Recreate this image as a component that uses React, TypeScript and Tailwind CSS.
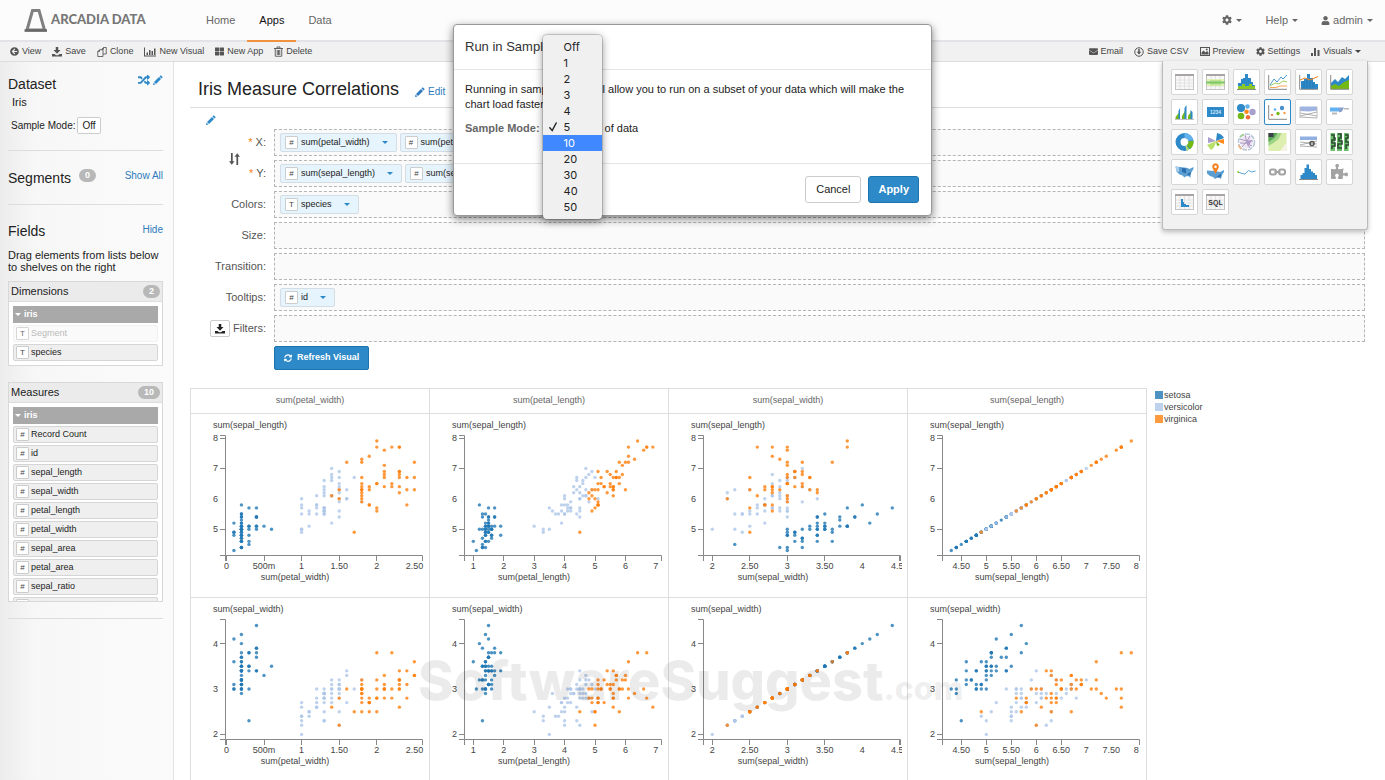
import { Fragment, useState, type ReactNode } from "react";
import {
  FaArrowCircleLeft,
  FaCog,
  FaEnvelope,
  FaPuzzlePiece,
  FaRandom,
  FaSyncAlt,
  FaThLarge,
  FaUser,
} from "react-icons/fa";

/* ---------- data: sepal length, sepal width, petal length, petal width (x10) ---------- */

const SETOSA =
  "51 35 14 2,49 30 14 2,47 32 13 2,46 31 15 2,50 36 14 2,54 39 17 4,46 34 14 3,50 34 15 2,44 29 14 2,49 31 15 1,54 37 15 2,48 34 16 2,48 30 14 1,43 30 11 1,58 40 12 2,57 44 15 4,54 39 13 4,51 35 14 3,57 38 17 3,51 38 15 3,54 34 17 2,51 37 15 4,46 36 10 2,51 33 17 5,48 34 19 2,50 30 16 2,50 34 16 4,52 35 15 2,52 34 14 2,47 32 16 2,48 31 16 2,54 34 15 4,52 41 15 1,55 42 14 2,49 31 15 2,50 32 12 2,55 35 13 2,49 36 14 1,44 30 13 2,51 34 15 2,50 35 13 3,45 23 13 3,44 32 13 2,50 35 16 6,51 38 19 4,48 30 14 3,51 38 16 2,46 32 14 2,53 37 15 2,50 33 14 2";
const VERSICOLOR =
  "70 32 47 14,64 32 45 15,69 31 49 15,55 23 40 13,65 28 46 15,57 28 45 13,63 33 47 16,49 24 33 10,66 29 46 13,52 27 39 14,50 20 35 10,59 30 42 15,60 22 40 10,61 29 47 14,56 29 36 13,67 31 44 14,56 30 45 15,58 27 41 10,62 22 45 15,56 25 39 11,59 32 48 18,61 28 40 13,63 25 49 15,61 28 47 12,64 29 43 13,66 30 44 14,68 28 48 14,67 30 50 17,60 29 45 15,57 26 35 10,55 24 38 11,55 24 37 10,58 27 39 12,60 27 51 16,54 30 45 15,60 34 45 16,67 31 47 15,63 23 44 13,56 30 41 13,55 25 40 13,55 26 44 12,61 30 46 14,58 26 40 12,50 23 33 10,56 27 42 13,57 30 42 12,57 29 42 13,62 29 43 13,51 25 30 11,57 28 41 13";
const VIRGINICA =
  "63 33 60 25,58 27 51 19,71 30 59 21,63 29 56 18,65 30 58 22,76 30 66 21,49 25 45 17,73 29 63 18,67 25 58 18,72 36 61 25,65 32 51 20,64 27 53 19,68 30 55 21,57 25 50 20,58 28 51 24,64 32 53 23,65 30 55 18,77 38 67 22,77 26 69 23,60 22 50 15,69 32 57 23,56 28 49 20,77 28 67 20,63 27 49 18,67 33 57 21,72 32 60 18,62 28 48 18,61 30 49 18,64 28 56 21,72 30 58 16,74 28 61 19,79 38 64 20,64 28 56 22,63 28 51 15,61 26 56 14,77 30 61 23,63 34 56 24,64 31 55 18,60 30 48 18,69 31 54 21,67 31 56 24,69 31 51 23,58 27 51 19,68 32 59 23,67 33 57 25,67 30 52 23,63 25 50 19,65 30 52 20,62 34 54 23,59 30 51 18";

const parse = (s: string) => s.split(",").map((r) => r.split(" ").map((n) => Number(n) / 10));

const SPECIES = [
  { name: "setosa", color: "#1f77b4", rows: parse(SETOSA) },
  { name: "versicolor", color: "#aec7e8", rows: parse(VERSICOLOR) },
  { name: "virginica", color: "#ff7f0e", rows: parse(VIRGINICA) },
];

type Axis = {
  name: string;
  field: number;
  origin: number;
  step: number;
  ticks: [number, string, boolean][];
};

const X_AXES: Axis[] = [
  {
    name: "sum(petal_width)", field: 3, origin: 35.4, step: 75.2,
    ticks: [[0, "0", true], [0.5, "500m", true], [1, "1", true], [1.5, "1.50", true], [2, "2", true], [2.5, "2.50", false]],
  },
  {
    name: "sum(petal_length)", field: 2, origin: 12.9, step: 30.42,
    ticks: [[1, "1", true], [2, "2", true], [3, "3", true], [4, "4", true], [5, "5", true], [6, "6", true], [7, "7", false]],
  },
  {
    name: "sum(sepal_width)", field: 1, origin: -106.7, step: 75,
    ticks: [[2, "2", true], [2.5, "2.50", true], [3, "3", true], [3.5, "3.50", true], [4, "4", false], [4.5, "4.50", true]],
  },
  {
    name: "sum(sepal_length)", field: 0, origin: -171.7, step: 50,
    ticks: [[4.5, "4.50", true], [5, "5", true], [5.5, "5.50", true], [6, "6", true], [6.5, "6.50", true], [7, "7", false], [7.5, "7.50", false], [8, "8", false]],
  },
];

const Y_AXES: Axis[] = [
  {
    name: "sum(sepal_length)", field: 0, origin: 267.2, step: -30.4,
    ticks: [[8, "8", true], [7, "7", true], [6, "6", false], [5, "5", true]],
  },
  {
    name: "sum(sepal_width)", field: 1, origin: 227.2, step: -45.4,
    ticks: [[4, "4", true], [3, "3", false], [2, "2", true]],
  },
];

const snap = (n: number) => Math.floor(n) + 0.5;

function Scatter({ x, y }: { x: Axis; y: Axis }) {
  const px = (v: number) => x.origin + x.step * v;
  const py = (v: number) => y.origin + y.step * v;
  return (
    <svg viewBox="0 0 238 183" className="block h-auto w-full" role="img" aria-label={`${y.name} by ${x.name}`}>
      <svg width="233" height="183" fontSize="9" fill="#444">
        <text x="22" y="14">{y.name}</text>
        <g fill="none" stroke="#888">
          <path d="M29 21.5H34.5V141.5H29" />
          <path d="M34.5 147V141.5H231.5V147" />
          {x.ticks.filter((t) => t[2]).map(([v]) => (
            <path key={v} d={`M${snap(px(v))} 141.5V147`} />
          ))}
          {y.ticks.filter((t) => t[2]).map(([v]) => (
            <path key={v} d={`M34.5 ${snap(py(v))}H29`} />
          ))}
        </g>
        {x.ticks.map(([v, label]) => (
          <text key={v} x={px(v)} y="155" textAnchor="middle">{label}</text>
        ))}
        {y.ticks.map(([v, label]) => (
          <text key={v} x="27" y={py(v) + 3} textAnchor="end">{label}</text>
        ))}
        <text x="104" y="166" textAnchor="middle">{x.name}</text>
        {SPECIES.map((s) => (
          <g key={s.name} fill={s.color} fillOpacity="0.8">
            {s.rows.map((r, i) => (
              <circle key={i} cx={px(r[x.field])} cy={py(r[y.field])} r="1.7" />
            ))}
          </g>
        ))}
      </svg>
    </svg>
  );
}

/* ---------- small icons ---------- */

function Caret({ className = "" }: { className?: string }) {
  return (
    <svg viewBox="0 0 6 3" className={`h-[3px] w-[6px] shrink-0 ${className}`} fill="currentColor" aria-hidden="true">
      <path d="M0 0h6L3 3z" />
    </svg>
  );
}

const glyph = "h-[10px] w-[10px] shrink-0";

const DownloadGlyph = () => (
  <svg viewBox="0 0 20 20" className={glyph} fill="currentColor" aria-hidden="true">
    <path d="M7.500 0h5v6H17l-7 7.500L3 6h4.500zM0 14h5l3 2.500h4L15 14h5v5H0z" />
  </svg>
);
const CloneGlyph = () => (
  <svg viewBox="0 0 20 20" className={glyph} fill="none" stroke="currentColor" strokeWidth="1.700" aria-hidden="true">
    <path d="M9.500 4.500L13 1h5.500v13H12M13 1v3.500H9.500M1.500 9L5 5.500h7V19H1.500zM5 5.500V9H1.500" />
  </svg>
);
const BarsAxisGlyph = () => (
  <svg viewBox="0 0 24 20" className="h-[10px] w-[12px] shrink-0" fill="currentColor" aria-hidden="true">
    <path d="M0 1h2v16h22v2H0zM5 11h3v5H5zM10 6h3v10h-3zM15 8h3v8h-3zM20 3h3v13h-3z" />
  </svg>
);
const BarsGlyph = () => (
  <svg viewBox="0 0 18 20" className="h-[10px] w-[9px] shrink-0" fill="currentColor" aria-hidden="true">
    <path d="M0 12h4v6H0zM6 2h4v16H6zM13 6h4v12h-4z" />
  </svg>
);
const TrashGlyph = () => (
  <svg viewBox="0 0 18 22" className="h-[11px] w-[9px] shrink-0" fill="none" stroke="currentColor" strokeWidth="1.800" aria-hidden="true">
    <path d="M0 5h18M6 5V2h6v3M2.500 5v15.500h13V5M6.500 8v10M9 8v10M11.500 8v10" />
  </svg>
);
const CircleDownGlyph = () => (
  <svg viewBox="0 0 20 20" className={glyph} fill="none" stroke="currentColor" strokeWidth="2" aria-hidden="true">
    <circle cx="10" cy="10" r="8.500" />
    <path d="M10 4v9" strokeWidth="3" />
    <path d="M5.500 9.500h9L10 15z" fill="currentColor" stroke="none" />
  </svg>
);
const PictureGlyph = () => (
  <svg viewBox="0 0 20 18" className="h-[9px] w-[10px] shrink-0" fill="currentColor" aria-hidden="true">
    <path fillRule="evenodd" d="M0 0h20v18H0zM2 2v14h16V2z" />
    <path d="M3 15v-4l4-4 4 4 3-3 3 3v4z" />
    <circle cx="13.500" cy="5" r="1.800" />
  </svg>
);
const PencilGlyph = () => (
  <svg viewBox="0 0 20 20" className={glyph} fill="currentColor" aria-hidden="true">
    <path d="M15.500 0.500l4 4-2.500 2.500-4-4zM12 4l4 4L6 18 2 14zM1.200 15.200l3.600 3.600L0 20z" />
  </svg>
);
const SwapGlyph = () => (
  <svg viewBox="0 0 20 22" className="h-[12px] w-[11px] shrink-0" fill="currentColor" aria-hidden="true">
    <path d="M3.500 0h3.200v15H10l-5 6.500L0 15h3.500zM13.500 22V7H10l5-6.500L20 7h-3.300v15z" />
  </svg>
);

/* ---------- visual palette drawings, all on a 20x18 board ---------- */

const Grid = ({ children }: { children?: ReactNode }) => (
  <>
    <rect x="0.500" y="1.500" width="18" height="15" fill="#f8f8f8" stroke="#c4c4c4" />
    <path d="M5 3v13M9.500 3v13M14 3v13M1 7h17M1 10h17M1 13h17" stroke="#ddd" strokeWidth="0.800" />
    {children}
    <rect x="0" y="1" width="19" height="2" fill="#a9a5a5" />
  </>
);
const Frame = () => <path d="M0.700 2V16.300H19" fill="none" stroke="#888" />;

const visuals: { name: string; art: ReactNode }[] = [
  { name: "Table", art: <Grid /> },
  {
    name: "Cross tabulation",
    art: (
      <Grid>
        <rect x="1" y="6" width="17" height="7" fill="#e2f1b8" />
        <rect x="4" y="7" width="11" height="5.500" fill="#c0e391" />
        <rect x="0" y="8.500" width="19" height="2" fill="#7cc66c" />
      </Grid>
    ),
  },
  {
    name: "Bars",
    art: (
      <>
        <path d="M1 14V10h3V6h2V5h2V1h3v4h3v4h2v3h2v3z" fill="#2d89c8" />
        <path d="M1 16v-3h4v-2h3v2h4v-2h3v2h3v3z" fill="#8bc926" />
        <path d="M0 16.500h19" stroke="#888" />
      </>
    ),
  },
  {
    name: "Lines",
    art: (
      <g fill="none" strokeWidth="1">
        <Frame />
        <path d="M2 12l4-6 3 3 4-5 2 2 4-4" stroke="#4a9ad4" />
        <path d="M2 13l5-3 4 1 4-3 4 1" stroke="#9bd05a" />
        <path d="M2 14.500h6l4-1.500h7" stroke="#f7a35c" />
      </g>
    ),
  },
  {
    name: "Combo",
    art: (
      <>
        <path d="M2 16V8h3V6h3V1h3v4h3v4h2v2h3v5z" fill="#2d89c8" />
        <path d="M5 8v8M8 6v10M11 6v10M14 9v7" stroke="#1c6ba3" strokeWidth="0.500" />
        <path d="M1 7l5-2 5 2 8-3.500" stroke="#f58220" fill="none" />
        <Frame />
      </>
    ),
  },
  {
    name: "Areas",
    art: (
      <>
        <path d="M1 16v-6l4-4 3 3 4-5 3 2 4-4v13z" fill="#2d89c8" />
        <path d="M1 16v-3l4-2 4 2 5-4 5-2v9z" fill="#74b816" />
        <Frame />
      </>
    ),
  },
  {
    name: "Grouped bars",
    art: (
      <>
        <path d="M0.500 16v-2l4-5v7zM7 16v-3l3.500-6v9zM13 16v-3l3-4v7z" fill="#74b816" />
        <path d="M3.500 16V8l1.500-3v11zM9.500 16V5L11.500 2v14zM15.500 16V7l2 2v7z" fill="#2d89c8" />
        <path d="M0 16.500h19" stroke="#999" strokeWidth="0.600" />
      </>
    ),
  },
  {
    name: "KPI",
    art: (
      <>
        <rect x="1" y="4" width="17" height="10" fill="#2d89c8" />
        <text x="9.500" y="11" fontSize="5" fontWeight="700" fill="#d3e8f6" textAnchor="middle">1234</text>
      </>
    ),
  },
  {
    name: "Bubbles",
    art: (
      <>
        <circle cx="4" cy="5" r="4" fill="#2d89c8" />
        <circle cx="10.500" cy="3.500" r="2.300" fill="#62b0ec" />
        <circle cx="15.500" cy="9" r="3.200" fill="#a99fcb" />
        <circle cx="4" cy="13" r="3.300" fill="#74b816" />
        <circle cx="9.500" cy="8.800" r="2.300" fill="#ff8a1e" />
        <circle cx="11" cy="14.200" r="2.200" fill="#f26b38" />
      </>
    ),
  },
  {
    name: "Scatter",
    art: (
      <>
        <Frame />
        <circle cx="14" cy="5" r="2.200" fill="#4a90cc" />
        <circle cx="7" cy="6.500" r="1.300" fill="#62b0ec" />
        <circle cx="10" cy="10.500" r="1.700" fill="#74b816" />
        <circle cx="4" cy="12" r="1.100" fill="#f26b38" />
        <circle cx="16.500" cy="10" r="1.200" fill="#ff9b3e" />
      </>
    ),
  },
  {
    name: "Parallel coordinates",
    art: (
      <g fill="none">
        <path d="M1 3.500h17v4l-8 1-9-.5z" fill="#9fb4e0" />
        <path d="M1 10l17 3M1 13l17-4M1 14l17 1" stroke="#9a9a9a" strokeWidth="0.800" />
        <path d="M1 4v11M18 4v11" stroke="#bbb" />
      </g>
    ),
  },
  {
    name: "Flow",
    art: (
      <>
        <path d="M0 4.500h9v4H0z" fill="#63b2ef" />
        <path d="M9 4.500h5l-2 4-3 1z" fill="#8a9fd0" />
        <path d="M2 9.500h5v2H2zM14 5h5v1.500h-5z" fill="#b9b9b9" />
      </>
    ),
  },
  {
    name: "Pie",
    art: (
      <g fill="none" strokeWidth="5">
        <circle cx="9.500" cy="9" r="6.500" stroke="#2d89c8" />
        <path d="M9.500 2.500A6.500 6.500 0 0 1 15.800 7.500" stroke="#62b0ec" />
        <path d="M15.900 8A6.500 6.500 0 0 1 13.500 14" stroke="#74b816" />
        <path d="M13 14.500A6.500 6.500 0 0 1 11 15.400" stroke="#b8e06a" />
      </g>
    ),
  },
  {
    name: "Radial",
    art: (
      <>
        <path d="M10 8L11 0q5 1 7 5z" fill="#2d89c8" />
        <path d="M10 8l8-2v5z" fill="#ff8a1e" />
        <path d="M10 8L1 12l4 5q4-2 5-9z" fill="#b8e06a" />
        <path d="M10 8L2 4v6z" fill="#a99fcb" />
        <path d="M10 8l4 4-3 1z" fill="#74b816" />
      </>
    ),
  },
  {
    name: "Chord",
    art: (
      <g fill="none">
        <circle cx="9.500" cy="9" r="8" stroke="#b9c9d8" strokeWidth="1.600" strokeDasharray="5 1" />
        <circle cx="9.500" cy="9" r="6.500" fill="#eee7f3" />
        <path d="M3 6q6 3 13 2M5 14q5-5 8-11M8 2q1 8 5 13M3 10q7-1 12 3" stroke="#a58fb8" strokeWidth="0.900" />
        <path d="M9 8l6-1-4 7z" fill="#b09ccc" />
        <path d="M1.500 12a8 8 0 0 0 3 4" stroke="#f1b27a" strokeWidth="1.600" />
        <path d="M3 4a8 8 0 0 1 4-2.500" stroke="#9dd08c" strokeWidth="1.600" />
      </g>
    ),
  },
  {
    name: "Heat map",
    art: (
      <>
        <rect x="0.500" y="0" width="18" height="18" fill="#dcefae" />
        <path d="M0.500 0h13l-3 6-5 4-5 3z" fill="#9ed486" />
        <path d="M0.500 0h9l-3 5-6 4z" fill="#5aa75a" />
        <path d="M0.500 0h5v4h-5z" fill="#3a3f4a" />
        <path d="M12 18l6.500-9v9z" fill="#f5f3e4" />
      </>
    ),
  },
  {
    name: "Parallel settings",
    art: (
      <g fill="none">
        <path d="M1 3.500h17v3.500H1z" fill="#8fb0e0" />
        <path d="M1 9l17 2M1 12l17-4M1 13l17 1" stroke="#9a9a9a" strokeWidth="0.800" />
        <circle cx="13" cy="10.500" r="2" stroke="#555" strokeWidth="1.600" />
      </g>
    ),
  },
  {
    name: "Dendrogram",
    art: (
      <>
        <path d="M0.500 0H5v18H0.500zM7 0h5v18H7zM14 0h4.500v18H14z" fill="#6abf69" />
        <path d="M1 2h3v3h1v2H2v3h3v3H2v3M8 1h3v4H9v3h3v3H8v4h4M15 2h3v3h-2v4h3v3h-3v4" stroke="#2c4a34" fill="none" strokeWidth="1.600" />
      </>
    ),
  },
  {
    name: "Map",
    art: (
      <>
        <path d="M0.500 3.500l9 1 3 .5 2 1 4-2v2l-2 3-1 3v3l-2-2-3 .5-1 1-2-2-3-1-3-3z" fill="#5b9fd2" />
        <path d="M7 5l4 .5v5L7 9zM12 11l4-2-1 4z" fill="#2d6fae" />
        <path d="M0.500 3.500l3.500.5V9L1.500 8z" fill="#a8cdea" />
      </>
    ),
  },
  {
    name: "Marker map",
    art: (
      <>
        <path d="M1 7.500l8 .5 5 1 4-2v2l-2 3-1 4-3-2-3 2-2-2-3-1-3-2.500z" fill="#5b9fd2" />
        <path d="M10 14.500l5-4v3l-2 1z" fill="#2d6fae" />
        <path d="M9.500 11L6.500 5a3.300 3.300 0 1 1 6 0z" fill="#f58220" />
        <circle cx="9.500" cy="3.700" r="1.300" fill="#fff" />
      </>
    ),
  },
  {
    name: "Spark lines",
    art: (
      <>
        <path d="M1 9l4 1.500 3 .5 3.500-3.500 3 1.500 4-1" stroke="#4a9ad4" fill="none" strokeWidth="0.900" />
        <circle cx="1.200" cy="9" r="0.900" fill="#8bc926" />
      </>
    ),
  },
  {
    name: "Link",
    art: (
      <g fill="none" stroke="#a3a3a3" strokeWidth="2">
        <rect x="2" y="6.500" width="6" height="5" rx="2" />
        <rect x="11" y="6.500" width="6" height="5" rx="2" />
        <path d="M6.500 9h6" />
      </g>
    ),
  },
  {
    name: "Histogram",
    art: (
      <>
        <path d="M1.500 16v-4h2v-2h2V5h2V1.500h2.500V6h2v2.500h2V10h2v2h2v4z" fill="#2d89c8" />
        <path d="M0 16.500h19" stroke="#888" />
      </>
    ),
  },
  { name: "Extension", art: <FaPuzzlePiece x="1" y="0" size="17" color="#a3a3a3" /> },
  {
    name: "Table histogram",
    art: (
      <Grid>
        <path d="M6 14V6h2v3h1v2h2v1h3v2z" fill="#2d89c8" />
      </Grid>
    ),
  },
  {
    name: "SQL",
    art: (
      <Grid>
        <text x="9.500" y="12" fontSize="7" fontWeight="700" fill="#333" textAnchor="middle">SQL</text>
      </Grid>
    ),
  },
];

/* ---------- page parts ---------- */

function Badge({ children }: { children: ReactNode }) {
  return (
    <span className="flex h-[13px] items-center rounded-full bg-[#b8b8b8] px-[6px] text-[9px] font-bold text-white">
      {children}
    </span>
  );
}

function TypeTag({ children }: { children: string }) {
  return (
    <span className="flex h-[13px] w-[13px] shrink-0 items-center justify-center rounded-[1px] border border-[#ccc] bg-white text-[8px] text-[#444]">
      {children}
    </span>
  );
}

function FieldBox({ title, count, children }: { title: string; count: number; children: ReactNode }) {
  return (
    <section className="border border-[#d8d8d8] bg-white">
      <h3 className="flex h-5 items-center justify-between border-b border-[#ddd] bg-[#ebebeb] px-[2px] text-[11px] text-[#222]">
        {title}
        <Badge>{count}</Badge>
      </h3>
      <div className="p-1">
        <div className="flex h-[17px] items-center gap-[3px] bg-[#a9a9a9] px-[2px] text-[9px] font-bold text-white">
          <Caret />
          iris
        </div>
        {children}
      </div>
    </section>
  );
}

function Field({ tag, name, off = false }: { tag: string; name: string; off?: boolean }) {
  return (
    <li
      className={`mt-[2px] flex h-[17px] items-center gap-[2px] rounded-[2px] border px-[2px] text-[9px] ${
        off ? "border-[#eee] bg-[#fafafa] text-[#aaa] opacity-80" : "border-[#d5d5d5] bg-[#efefef] text-[#222]"
      }`}
    >
      <TypeTag>{tag}</TypeTag>
      {name}
    </li>
  );
}

function Pill({ tag, name }: { tag: string; name: string }) {
  return (
    <button
      type="button"
      className="flex h-[19px] shrink-0 items-center rounded-[2px] border border-[#d3dde3] bg-[#e6f4fd] pr-[8px] pl-1 text-[9px] text-[#222]"
    >
      <TypeTag>{tag}</TypeTag>
      <span className="pr-[12px] pl-[3px]">{name}</span>
      <Caret className="text-[#2d89c8]" />
    </button>
  );
}

type Shelf = { label: string; required?: boolean; load?: boolean; pills: [string, string][] };

const shelves: Shelf[] = [
  {
    label: "X:", required: true,
    pills: [["#", "sum(petal_width)"], ["#", "sum(petal_length)"], ["#", "sum(sepal_width)"], ["#", "sum(sepal_length)"]],
  },
  { label: "Y:", required: true, pills: [["#", "sum(sepal_length)"], ["#", "sum(sepal_width)"]] },
  { label: "Colors:", pills: [["T", "species"]] },
  { label: "Size:", pills: [] },
  { label: "Transition:", pills: [] },
  { label: "Tooltips:", pills: [["#", "id"]] },
  { label: "Filters:", load: true, pills: [] },
];

const measures = [
  "Record Count", "id", "sepal_length", "sepal_width", "petal_length", "petal_width", "sepal_area", "petal_area", "sepal_ratio", "petal_ratio",
];

const samples = ["Off", "1", "2", "3", "4", "5", "10", "20", "30", "40", "50"];

function Tool({ icon, children }: { icon: ReactNode; children: ReactNode }) {
  return (
    <button type="button" className="flex items-center gap-[3px] whitespace-nowrap">
      <span className="text-[#555]">{icon}</span>
      {children}
    </button>
  );
}

function Header() {
  return (
    <header className="flex h-[42px] shrink-0 items-stretch border-b-2 border-[#e3e3e8] bg-[#fcfcfc] pr-3">
      <a href="#home" className="flex w-[194px] items-center gap-[3px] pl-6 text-[#777]">
        <svg viewBox="0 0 24 24" className="h-6 w-6 shrink-0" aria-hidden="true">
          <path d="M8.500 2.500h6.500L20.500 22H3z" fill="none" stroke="#808080" strokeWidth="3" />
          <path d="M0.500 22.500h22.500" stroke="#666" strokeWidth="2.500" />
        </svg>
        <span className="pr-1 font-['Lato'] text-[13px] font-black whitespace-nowrap">ARCADIA DATA</span>
      </a>
      <nav className="flex text-[11px] text-[#666]">
        <a href="#home" className="flex items-center px-3">Home</a>
        <a href="#apps" className="-mb-[2px] flex items-center border-b-2 border-[#f0923f] px-3 text-[#111]">Apps</a>
        <a href="#data" className="flex items-center px-3">Data</a>
      </nav>
      <div className="ml-auto flex items-center gap-[23px] text-[11px] text-[#666]">
        <button type="button" aria-label="Administration" className="flex items-center gap-1">
          <FaCog size={10} />
          <Caret />
        </button>
        <button type="button" className="flex items-center gap-1">
          Help <Caret />
        </button>
        <button type="button" className="flex items-center gap-[3px]">
          <FaUser size={9} />
          admin <Caret className="ml-px" />
        </button>
      </div>
    </header>
  );
}

function Toolbar() {
  return (
    <div className="flex h-5 shrink-0 items-center justify-between border-b border-[#ddd] bg-[#f1f1f1] pr-6 pl-[10px] text-[9px] text-[#444]">
      <div className="flex gap-[11px]">
        <Tool icon={<FaArrowCircleLeft size={9} />}>View</Tool>
        <Tool icon={<DownloadGlyph />}>Save</Tool>
        <Tool icon={<CloneGlyph />}>Clone</Tool>
        <Tool icon={<BarsAxisGlyph />}>New Visual</Tool>
        <Tool icon={<FaThLarge size={9} />}>New App</Tool>
        <Tool icon={<TrashGlyph />}>Delete</Tool>
      </div>
      <div className="flex gap-[11px]">
        <Tool icon={<FaEnvelope size={9} />}>Email</Tool>
        <Tool icon={<CircleDownGlyph />}>Save CSV</Tool>
        <Tool icon={<PictureGlyph />}>Preview</Tool>
        <Tool icon={<FaCog size={9} />}>Settings</Tool>
        <Tool icon={<BarsGlyph />}>
          Visuals <Caret />
        </Tool>
      </div>
    </div>
  );
}

function Sidebar() {
  return (
    <aside className="w-[174px] shrink-0 overflow-hidden border-r border-[#e2e2e2] bg-linear-to-r from-[#ececec] via-[#f7f7f7] via-20% to-[#fbfbfb] pr-[10px] pl-2 text-[#222]">
      <div className="flex h-[89px] flex-col border-b border-[#ddd] pt-3">
        <div className="flex items-start justify-between">
          <h2 className="text-[14px] leading-5">Dataset</h2>
          <span className="flex items-center gap-[3px] text-[#2d89c8]">
            <button type="button" aria-label="Change dataset"><FaRandom size={12} /></button>
            <button type="button" aria-label="Edit dataset"><PencilGlyph /></button>
          </span>
        </div>
        <p className="pl-1 text-[11px] leading-4">Iris</p>
        <div className="flex items-center gap-[2px] pt-[7px] pl-[3px] text-[10px]">
          Sample Mode:
          <button type="button" className="h-[17px] rounded-[2px] border border-[#ccc] bg-white px-1 text-[10px] leading-[15px]">Off</button>
        </div>
      </div>
      <div className="flex h-[54px] items-center border-b border-[#ddd]">
        <h2 className="text-[14px] leading-5">Segments</h2>
        <span className="-mt-1 ml-2"><Badge>0</Badge></span>
        <a href="#segments" className="-mt-1 ml-auto text-[10px] text-[#2d7bbd]">Show All</a>
      </div>
      <div className="flex items-center justify-between pt-4">
        <h2 className="text-[14px] leading-5">Fields</h2>
        <a href="#fields" className="-mt-1 text-[10px] text-[#2d7bbd]">Hide</a>
      </div>
      <p className="pt-2 text-[11px] leading-3 whitespace-nowrap">
        Drag elements from lists below
        <br />
        to shelves on the right
      </p>
      <div className="pt-2">
        <FieldBox title="Dimensions" count={2}>
          <ul>
            <Field tag="T" name="Segment" off />
            <Field tag="T" name="species" />
          </ul>
        </FieldBox>
      </div>
      <div className="mt-4 border-b border-[#ddd] pb-4">
        <div className="h-[220px] overflow-hidden border-b border-[#d8d8d8]">
          <FieldBox title="Measures" count={10}>
            <ul>
              {measures.map((m) => (
                <Field key={m} tag="#" name={m} />
              ))}
            </ul>
          </FieldBox>
        </div>
      </div>
    </aside>
  );
}

function Palette() {
  return (
    <div className="absolute -top-px right-[17px] grid grid-cols-6 gap-1 rounded-b-[3px] border border-t-0 border-[#bbb] bg-[#f1f1f1] pt-2 pr-[14px] pb-[14px] pl-2 shadow-[0_2px_5px_rgba(0,0,0,0.25)]">
      {visuals.map((v) => (
        <button
          key={v.name}
          type="button"
          title={v.name}
          className={`flex h-[26px] w-[27px] items-center justify-center rounded-[2px] border bg-white ${
            v.name === "Scatter" ? "border-[#2d89c8]" : "border-[#d6d6d6]"
          }`}
        >
          <svg viewBox="0 0 19 18" className="h-[18px] w-[19px]" aria-hidden="true">{v.art}</svg>
        </button>
      ))}
    </div>
  );
}

function Shelves() {
  return (
    <div className="relative grid grid-cols-[76px_1fr] gap-x-2 gap-y-1">
      {shelves.map((s) => (
        <Fragment key={s.label}>
          <div className="flex items-center justify-end gap-[3px] text-[11px] text-[#555]">
            {s.required && <span className="text-[#f58220]">*</span>}
            {s.load && (
              <button type="button" aria-label="Load filters" className="flex h-[17px] w-5 items-center justify-center rounded-[2px] border border-[#ccc] bg-white text-[#222]">
                <DownloadGlyph />
              </button>
            )}
            {s.label}
          </div>
          <div className="flex h-[27px] items-center gap-[3px] overflow-hidden border border-dashed border-[#b5b5b5] bg-[#fafafa] px-[5px]">
            {s.pills.map(([tag, name]) => (
              <Pill key={name} tag={tag} name={name} />
            ))}
          </div>
        </Fragment>
      ))}
      <button type="button" aria-label="Swap X and Y" className="absolute top-6 left-[39px] text-[#555]">
        <SwapGlyph />
      </button>
    </div>
  );
}

function Charts() {
  return (
    <div className="flex gap-2 pt-[18px]">
      <div className="relative w-full max-w-[957px]">
        <div className="grid grid-cols-4 border-t border-l border-[#ddd]">
          {X_AXES.map((x) => (
            <div key={x.name} className="flex h-[25px] items-center justify-center border-r border-b border-[#ddd] text-[9px] text-[#666]">
              {x.name}
            </div>
          ))}
          {Y_AXES.map((y) =>
            X_AXES.map((x) => (
              <div key={y.name + x.name} className="border-r border-b border-[#ddd]">
                <Scatter x={x} y={y} />
              </div>
            )),
          )}
        </div>
        <div className="pointer-events-none absolute top-[262px] left-[228px] flex items-baseline font-['Inter'] text-black/8">
          <span className="text-[54px] leading-[62px] font-extrabold">SoftwareSuggest</span>
          <span className="text-[32px] font-extrabold">.com</span>
        </div>
      </div>
      <ul className="pt-px text-[9px] leading-3 text-[#444]">
        {SPECIES.map((s) => (
          <li key={s.name} className="flex items-center gap-px">
            <span className="h-2 w-2 opacity-80" style={{ backgroundColor: s.color }} />
            {s.name}
          </li>
        ))}
      </ul>
    </div>
  );
}

function SampleDialog() {
  const [value, setValue] = useState("5");
  return (
    <div
      role="dialog"
      aria-labelledby="sample-title"
      className="absolute inset-x-0 top-6 mx-auto w-[479px] rounded-[4px] border border-[#999] bg-white text-[11px] text-[#222] shadow-[0_3px_9px_rgba(0,0,0,0.5)]"
    >
      <h2 id="sample-title" className="border-b border-[#e5e5e5] px-[11px] py-3 text-[13px] leading-5 text-[#333]">
        Run in Sample Mode
      </h2>
      <div className="px-[11px] pt-3 pb-[26px]">
        <p className="leading-[15px]">
          Running in sample mode will allow you to run on a subset of your data which will make the chart load faster.
        </p>
        <div className="flex items-center pt-2">
          <label htmlFor="sample" className="font-bold text-[#666]">Sample Mode:</label>
          <span className="relative ml-[3px]">
            <select
              id="sample"
              value={value}
              onChange={(e) => setValue(e.target.value)}
              className="block h-[17px] w-[58px] rounded-[3px] border border-[#ccc] bg-white text-[11px]"
            >
              {samples.map((s) => (
                <option key={s}>{s}</option>
              ))}
            </select>
            <div
              role="listbox"
              aria-label="Sample size"
              className="absolute -top-[85px] left-0 w-[59px] rounded-[4px] bg-[#f0f0f0] py-1 font-['Inter'] shadow-[0_2px_8px_rgba(0,0,0,0.45),0_0_0_1px_rgba(0,0,0,0.15)]"
            >
              {samples.map((s) => (
                <button
                  key={s}
                  type="button"
                  role="option"
                  aria-selected={s === value}
                  onClick={() => setValue(s)}
                  className={`flex h-4 w-full items-center text-[11px] ${s === "10" ? "bg-[#4088ff] text-white" : "text-[#222]"}`}
                >
                  <span className="flex w-[21px] justify-center">
                    {s === value && (
                      <svg viewBox="0 0 10 12" className="h-[10px] w-2" aria-hidden="true">
                        <path d="M1 7l3 3.500L9 1" fill="none" stroke="currentColor" strokeWidth="1.800" strokeLinecap="round" />
                      </svg>
                    )}
                  </span>
                  {s}
                </button>
              ))}
            </div>
          </span>
          <span className="ml-1">of data</span>
        </div>
      </div>
      <div className="flex justify-end gap-[7px] border-t border-[#e5e5e5] p-3">
        <button type="button" className="h-[27px] rounded-[3px] border border-[#ccc] bg-white px-[10px]">Cancel</button>
        <button type="button" className="h-[27px] rounded-[3px] border border-[#1b74ad] bg-[#2d89c8] px-[9px] font-bold text-white">Apply</button>
      </div>
    </div>
  );
}

export default function App() {
  return (
    <div className="relative flex h-screen flex-col overflow-hidden bg-white font-['Liberation_Sans',sans-serif]">
      <Header />
      <Toolbar />
      <div className="relative flex min-h-0 flex-1">
        <Sidebar />
        <main className="min-w-0 flex-1 overflow-hidden pr-5 pl-4">
          <div className="flex h-[46px] items-center gap-[14px] border-b border-[#ddd] pt-[10px] pl-2">
            <h1 className="text-[18px] text-[#222]">Iris Measure Correlations</h1>
            <a href="#edit" className="flex items-center gap-[3px] pt-1 pl-[2px] text-[10px] text-[#2d7bbd]">
              <PencilGlyph />
              Edit
            </a>
          </div>
          <div className="flex h-[21px] items-center pt-[2px] pl-4 text-[#2d89c8]">
            <button type="button" aria-label="Edit shelves"><PencilGlyph /></button>
          </div>
          <Shelves />
          <button
            type="button"
            className="mt-1 ml-[84px] flex h-6 items-center gap-[5px] rounded-[2px] border border-[#1b74ad] bg-[#2d89c8] px-[9px] text-[9px] font-bold text-white"
          >
            <FaSyncAlt size={8} />
            Refresh Visual
          </button>
          <Charts />
        </main>
        <Palette />
      </div>
      <SampleDialog />
    </div>
  );
}
